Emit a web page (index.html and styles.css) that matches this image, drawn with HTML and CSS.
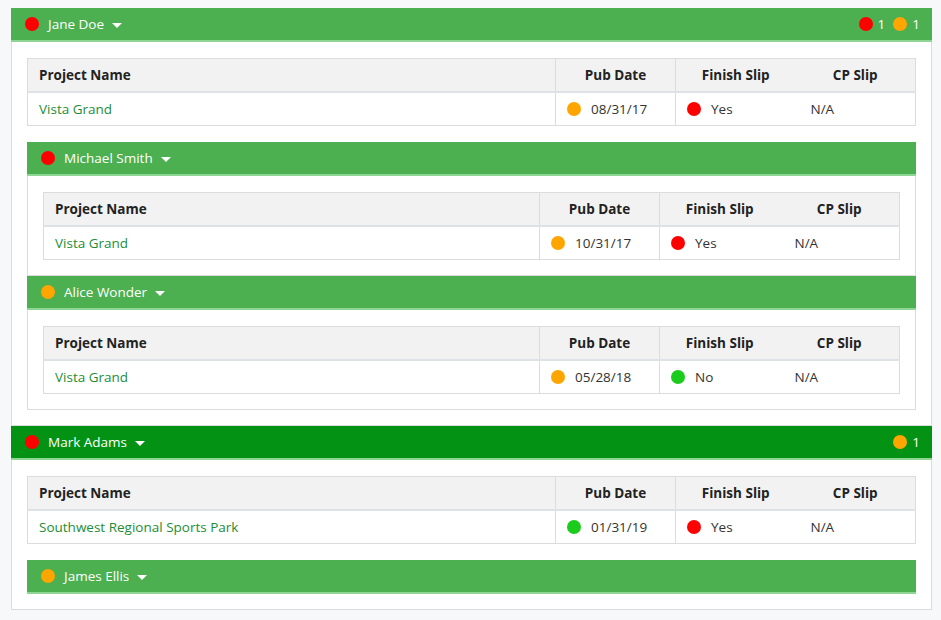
FILE: index.html
```html
<!DOCTYPE html>
<html lang="en">
<head>
    <meta charset="UTF-8">
    <meta name="viewport" content="width=device-width, initial-scale=1.0">
    <title>Project Status</title>
    <link rel="stylesheet" href="styles.css">
</head>
<body>

<div class="board">

    <!-- Jane Doe -->
    <div class="panel">
        <div class="panel-head">
            <span class="dot red"></span>
            <span class="name">Jane Doe</span>
            <span class="caret"></span>
            <span class="counts">
                <span class="dot red"></span><span class="count">1</span>
                <span class="dot orange"></span><span class="count">1</span>
            </span>
        </div>
        <div class="panel-body">
            <table class="grid">
                <colgroup><col><col class="fixed"><col class="fixed"><col class="fixed"></colgroup>
                <tr>
                    <th class="left sep">Project Name</th>
                    <th class="sep">Pub Date</th>
                    <th>Finish Slip</th>
                    <th>CP Slip</th>
                </tr>
                <tr>
                    <td class="sep"><a href="#">Vista Grand</a></td>
                    <td class="sep"><span class="dot orange"></span>08/31/17</td>
                    <td><span class="dot red"></span>Yes</td>
                    <td class="cp">N/A</td>
                </tr>
            </table>

            <!-- Michael Smith -->
            <div class="panel nested">
                <div class="panel-head">
                    <span class="dot red"></span>
                    <span class="name">Michael Smith</span>
                    <span class="caret"></span>
                </div>
                <div class="panel-body">
                    <table class="grid">
                        <colgroup><col><col class="fixed"><col class="fixed"><col class="fixed"></colgroup>
                        <tr>
                            <th class="left sep">Project Name</th>
                            <th class="sep">Pub Date</th>
                            <th>Finish Slip</th>
                            <th>CP Slip</th>
                        </tr>
                        <tr>
                            <td class="sep"><a href="#">Vista Grand</a></td>
                            <td class="sep"><span class="dot orange"></span>10/31/17</td>
                            <td><span class="dot red"></span>Yes</td>
                            <td class="cp">N/A</td>
                        </tr>
                    </table>
                </div>
            </div>

            <!-- Alice Wonder -->
            <div class="panel nested flush">
                <div class="panel-head">
                    <span class="dot orange"></span>
                    <span class="name">Alice Wonder</span>
                    <span class="caret"></span>
                </div>
                <div class="panel-body">
                    <table class="grid">
                        <colgroup><col><col class="fixed"><col class="fixed"><col class="fixed"></colgroup>
                        <tr>
                            <th class="left sep">Project Name</th>
                            <th class="sep">Pub Date</th>
                            <th>Finish Slip</th>
                            <th>CP Slip</th>
                        </tr>
                        <tr>
                            <td class="sep"><a href="#">Vista Grand</a></td>
                            <td class="sep"><span class="dot orange"></span>05/28/18</td>
                            <td><span class="dot green"></span>No</td>
                            <td class="cp">N/A</td>
                        </tr>
                    </table>
                </div>
            </div>
        </div>
    </div>

    <!-- Mark Adams -->
    <div class="panel">
        <div class="panel-head dark">
            <span class="dot red"></span>
            <span class="name">Mark Adams</span>
            <span class="caret"></span>
            <span class="counts">
                <span class="dot orange"></span><span class="count">1</span>
            </span>
        </div>
        <div class="panel-body">
            <table class="grid">
                <colgroup><col><col class="fixed"><col class="fixed"><col class="fixed"></colgroup>
                <tr>
                    <th class="left sep">Project Name</th>
                    <th class="sep">Pub Date</th>
                    <th>Finish Slip</th>
                    <th>CP Slip</th>
                </tr>
                <tr>
                    <td class="sep"><a href="#">Southwest Regional Sports Park</a></td>
                    <td class="sep"><span class="dot green"></span>01/31/19</td>
                    <td><span class="dot red"></span>Yes</td>
                    <td class="cp">N/A</td>
                </tr>
            </table>

            <!-- James Ellis (collapsed) -->
            <div class="panel nested collapsed">
                <div class="panel-head">
                    <span class="dot orange"></span>
                    <span class="name">James Ellis</span>
                    <span class="caret"></span>
                </div>
            </div>
        </div>
    </div>

</div>

</body>
</html>
```

FILE: styles.css
```css
body {
    font-family: 'Open Sans', 'Noto Sans', sans-serif;
    font-size: 13.5px;
    background-color: #f7f8fa;
    color: #222;
    margin: 0;
    padding: 8px 9px 0 11px;
}

.board {
    width: 100%;
}

/* Panels */
.panel-head {
    display: flex;
    align-items: center;
    height: 32px;
    padding: 0 12px 0 14px;
    background-color: #4caf50;
    border-bottom: 2px solid #8fd694;
    color: #fff;
}

.panel-head.dark {
    background-color: #039213;
}

.panel-head .name {
    margin-left: 9px;
}

.caret {
    width: 0;
    height: 0;
    margin-left: 8px;
    margin-top: 2px;
    border-left: 5px solid transparent;
    border-right: 5px solid transparent;
    border-top: 5px solid #fff;
}

.counts {
    margin-left: auto;
    display: flex;
    align-items: center;
}

.counts .count {
    margin-left: 5px;
    margin-right: 8px;
}

.counts .count:last-child {
    margin-right: 0;
}

.panel-body {
    background-color: #fff;
    border: 1px solid #dcdcdc;
    border-top: none;
    padding: 16px 15px 15px 15px;
}

.nested {
    margin-top: 16px;
}

.nested.flush {
    margin-top: 0;
}

/* Status dots */
.dot {
    display: inline-block;
    width: 14px;
    height: 14px;
    border-radius: 50%;
    vertical-align: -2px;
    flex-shrink: 0;
}

.red { background-color: #ff0000; }
.orange { background-color: #ffa500; }
.green { background-color: #1ccc1c; }

/* Tables */
.grid {
    width: 100%;
    border-collapse: collapse;
    table-layout: fixed;
    border: 1px solid #dcdcdc;
}

.grid col.fixed {
    width: 120px;
}

.grid th {
    height: 32px;
    padding: 0 11px;
    background-color: #f2f2f2;
    border-bottom: 2px solid #dee2e6;
    font-weight: bold;
    color: #222;
    text-align: center;
}

.grid th.left {
    text-align: left;
}

.grid td {
    height: 32px;
    padding: 0 11px;
    color: #333;
    white-space: nowrap;
}

.grid .sep {
    border-right: 1px solid #dcdcdc;
}

.grid td .dot {
    margin-right: 10px;
}

.grid td.cp {
    padding-left: 15px;
}

.grid a {
    color: #1b8e35;
    text-decoration: none;
}
```
